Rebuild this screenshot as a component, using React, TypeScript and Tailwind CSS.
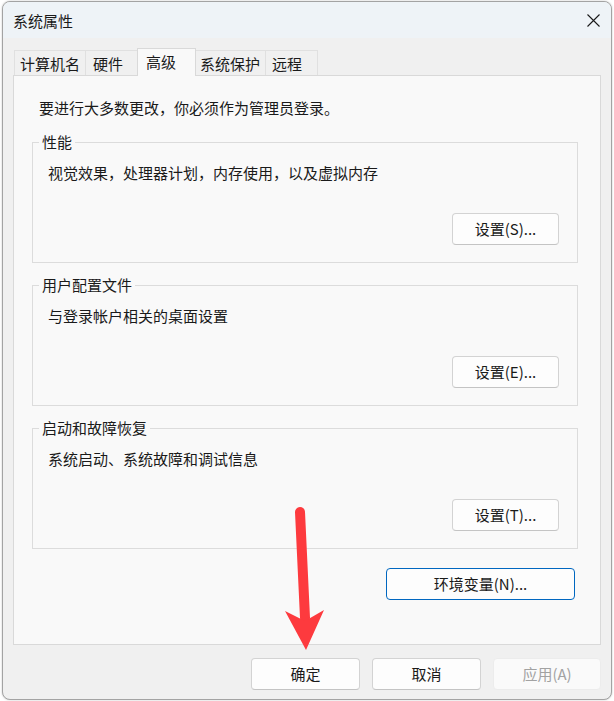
import React from "react";

type GroupProps = {
  label: string;
  desc: string;
  button: string;
  className?: string;
};

function WinButton({ children, className = "", disabled = false }: { children: React.ReactNode; className?: string; disabled?: boolean }) {
  return (
    <button
      className={
        "h-[32px] rounded-[4px] border text-[15px] leading-[20px] flex items-center justify-center " +
        (disabled
          ? "bg-[#fafafa] border-[#ececec] text-[#a2a2a2]"
          : "bg-[#fdfdfd] border-[#d3d3d3] border-b-[#c4c4c4] text-[#1a1a1a]") +
        " " +
        className
      }
    >
      {children}
    </button>
  );
}

function GroupBox({ label, desc, button, className = "" }: GroupProps) {
  return (
    <div className={"relative ml-[18px] w-[546px] h-[121px] border border-[#dcdcdc] flex flex-col " + className}>
      <span className="absolute left-[6px] -top-[11px] px-[3px] bg-[#f9f9f9] leading-[20px]">{label}</span>
      <p className="pl-[15px] pt-[20px] leading-[20px]">{desc}</p>
      <WinButton className="mt-[30px] self-end mr-[18px] w-[107px]">{button}</WinButton>
    </div>
  );
}

const tabs = [
  { name: "计算机名", cls: "ml-px w-[72px] pl-[5px]" },
  { name: "硬件", cls: "-ml-px w-[53px] pl-[7px]" },
  { name: "高级", cls: "-ml-px w-[59px] pl-[8px]", active: true },
  { name: "系统保护", cls: "-ml-px w-[71px] pl-[4px]" },
  { name: "远程", cls: "-ml-px w-[53px] pl-[6px]" },
];

export default function App() {
  return (
    <div
      className="relative w-[614px] h-[701px] bg-white text-[15px] text-[#1a1a1a] pt-px pl-[2px]"
      style={{ fontFamily: '"Noto Sans CJK SC", "Noto Sans", sans-serif' }}
    >
      <div className="w-[610px] h-[699px] rounded-[8px] border border-[#a3a3a3] overflow-hidden flex flex-col bg-[#f0f0f0] shadow-[0_0_2px_rgba(0,0,0,0.25)]">
        {/* title bar */}
        <div className="h-[36px] shrink-0 bg-[#eef3f7] flex items-center justify-between pl-[10px]">
          <span className="leading-[20px] mt-[1px]">系统属性</span>
          <svg className="mr-[11px] mt-[1px]" width="13" height="13" viewBox="0 0 13 13">
            <path d="M0.5 0.5 L12.5 12.5 M12.5 0.5 L0.5 12.5" stroke="#1a1a1a" strokeWidth="1.1" fill="none" />
          </svg>
        </div>

        <div className="flex-1 flex flex-col px-[10px]">
          {/* tabs */}
          <div className="mt-[10px] flex items-end">
            {tabs.map((t) =>
              t.active ? (
                <div
                  key={t.name}
                  className={"relative z-10 h-[28px] -mb-px bg-[#f9f9f9] border border-b-0 border-[#d9d9d9] flex items-center " + t.cls}
                >
                  <span className="leading-[20px] -mt-[1px]">{t.name}</span>
                </div>
              ) : (
                <div
                  key={t.name}
                  className={"h-[25px] bg-[#f0f0f0] border border-b-0 border-[#e0e0e0] flex items-center " + t.cls}
                >
                  <span className="leading-[20px] mt-[2px]">{t.name}</span>
                </div>
              )
            )}
          </div>

          {/* panel */}
          <div className="h-[570px] border border-[#d9d9d9] bg-[#f9f9f9] flex flex-col">
            <p className="pl-[25px] pt-[22px] leading-[20px]">要进行大多数更改，你必须作为管理员登录。</p>
            <GroupBox className="mt-[24px]" label="性能" desc="视觉效果，处理器计划，内存使用，以及虚拟内存" button="设置(S)..." />
            <GroupBox className="mt-[22px]" label="用户配置文件" desc="与登录帐户相关的桌面设置" button="设置(E)..." />
            <GroupBox className="mt-[22px]" label="启动和故障恢复" desc="系统启动、系统故障和调试信息" button="设置(T)..." />
            <button className="mt-[19px] ml-[372px] w-[189px] h-[32px] rounded-[4px] border border-[#0067c0] bg-[#fdfdfd] text-[15px] leading-[20px]">
              环境变量(N)...
            </button>
          </div>

          {/* bottom buttons */}
          <div className="mt-[13px] ml-[238px] flex gap-[12px]">
            <WinButton className="w-[111px]">确定</WinButton>
            <WinButton className="w-[111px]">取消</WinButton>
            <WinButton className="w-[110px]" disabled>
              应用(A)
            </WinButton>
          </div>
        </div>
      </div>

      {/* red annotation arrow */}
      <svg className="absolute left-0 top-0 pointer-events-none" width="614" height="701" viewBox="0 0 614 701">
        <path d="M300 512 L305 618" stroke="#fd3a3e" strokeWidth="10" strokeLinecap="round" fill="none" />
        <path d="M285 611 L306 650 L324 610 L305 621 Z" fill="#fd3a3e" />
      </svg>
    </div>
  );
}
